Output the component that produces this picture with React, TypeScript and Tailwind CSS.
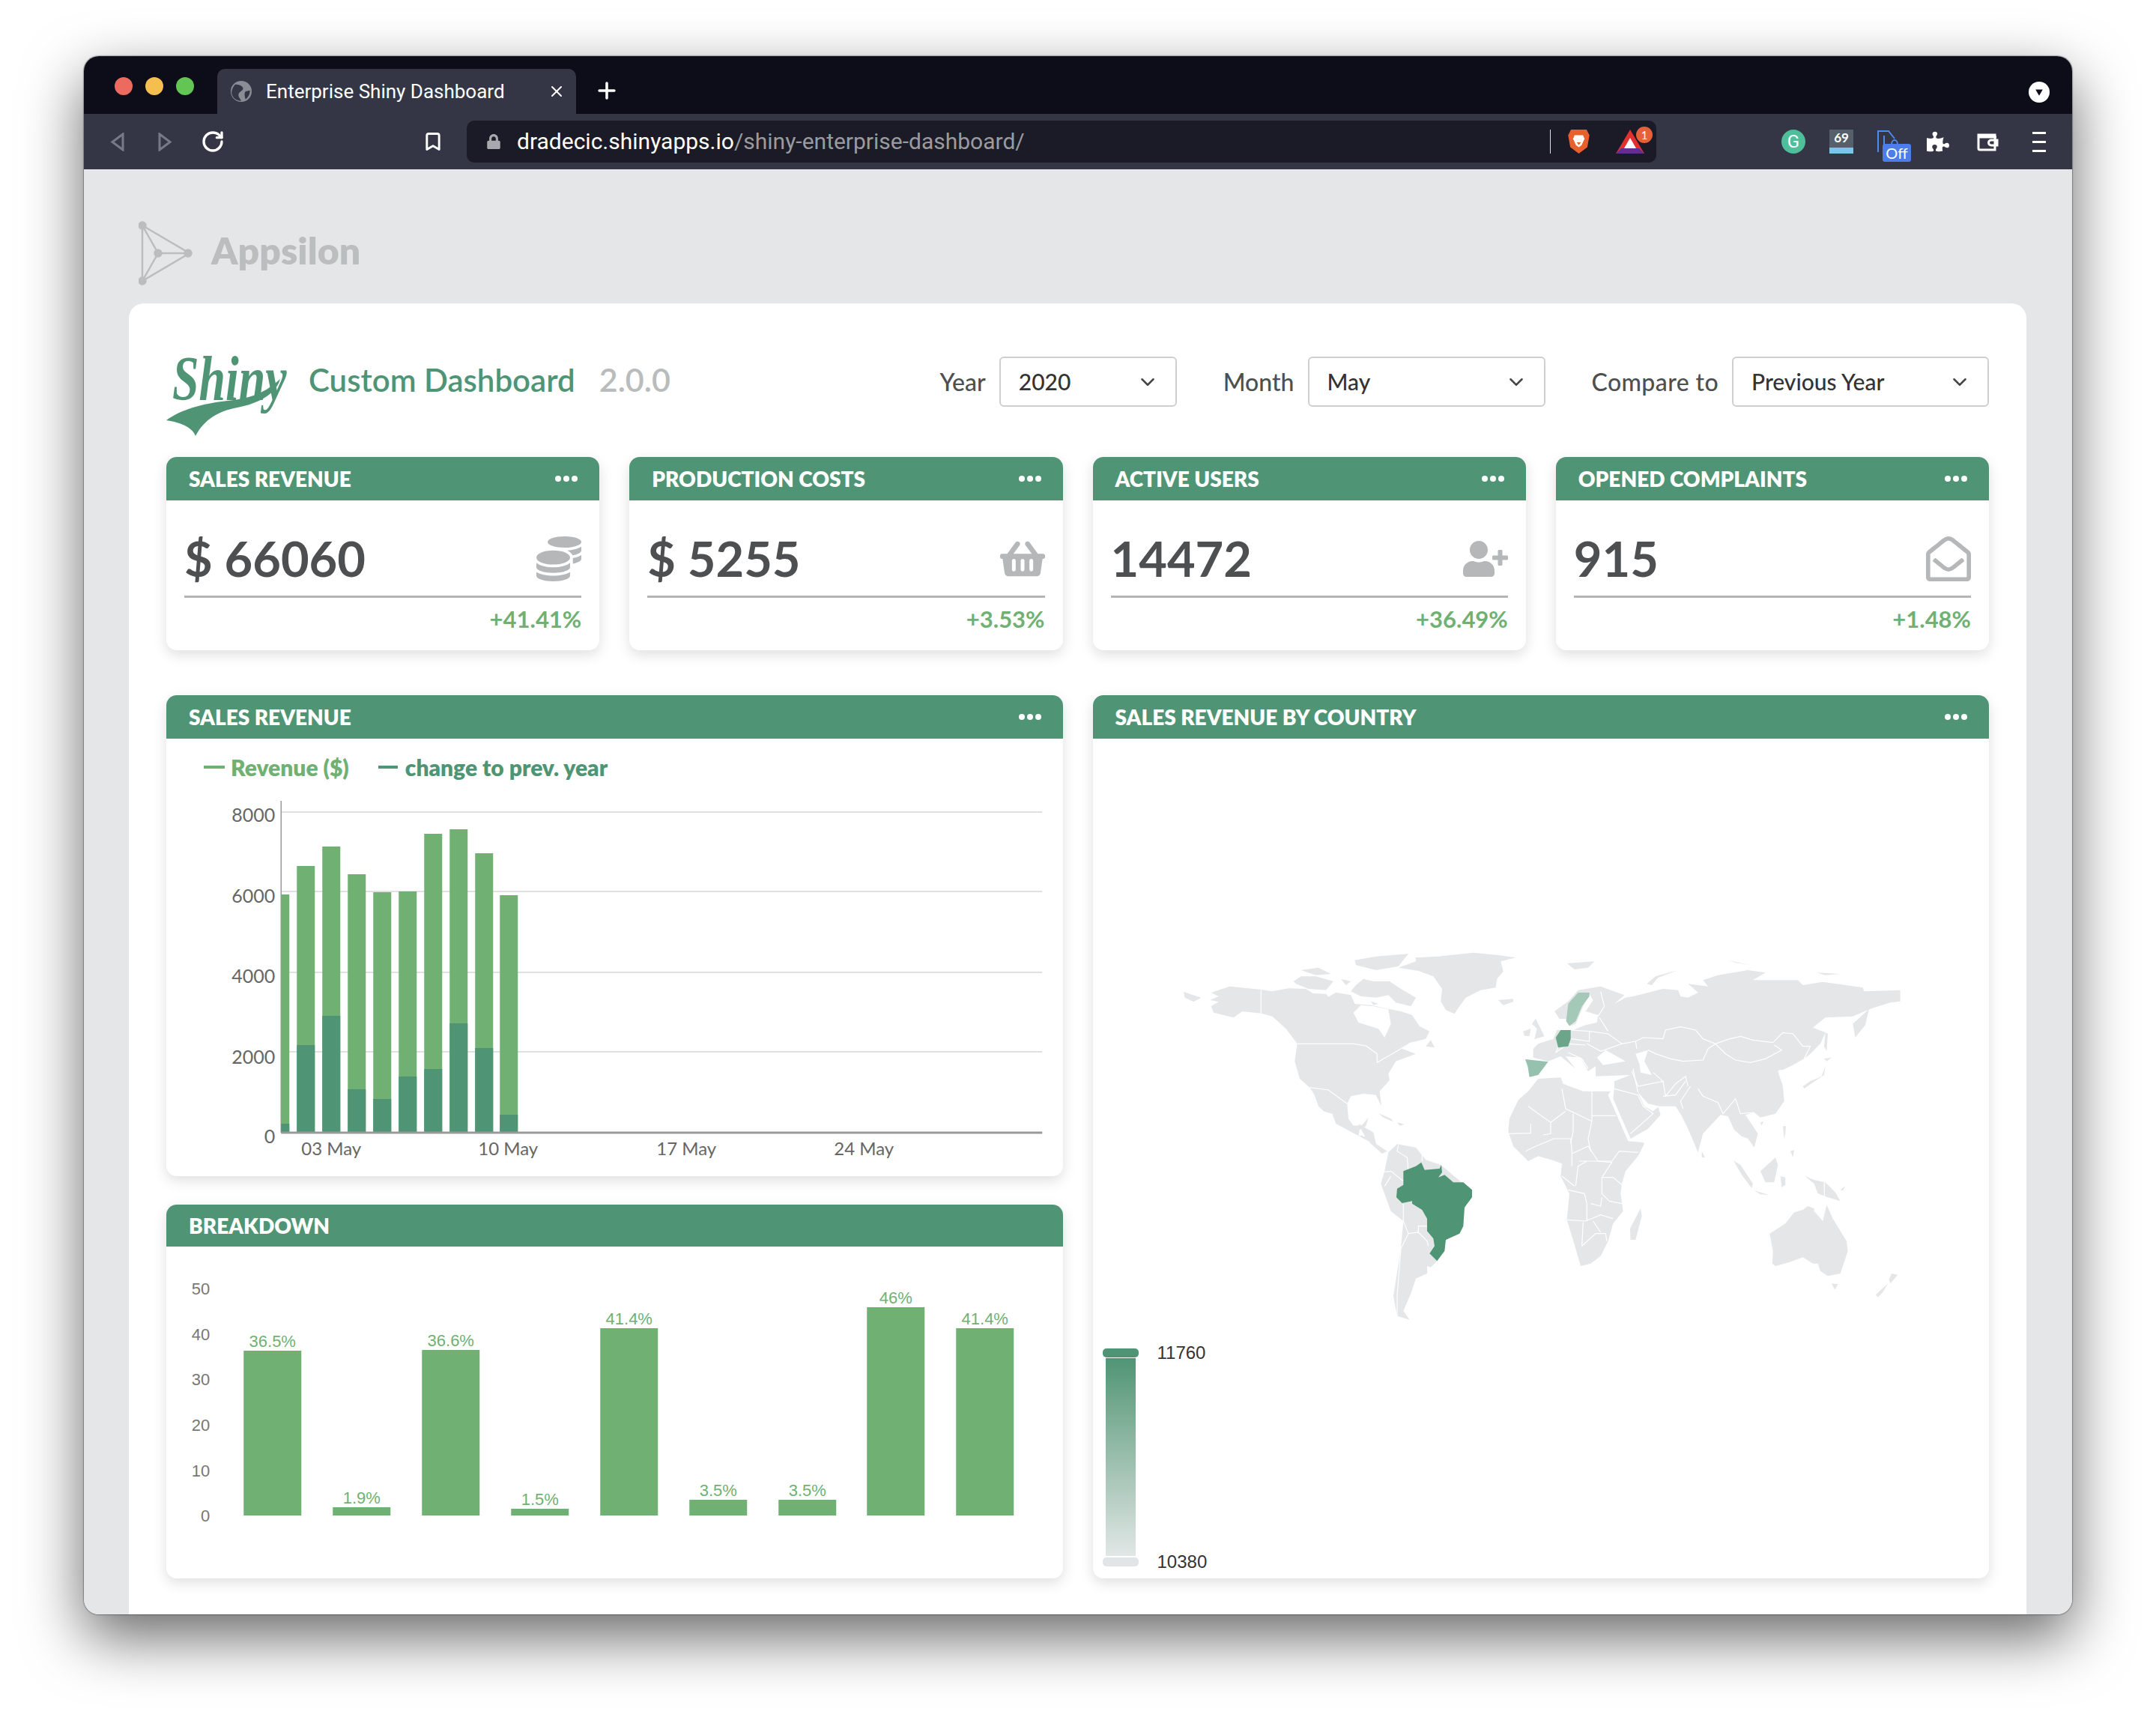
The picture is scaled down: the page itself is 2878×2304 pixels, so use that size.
import { FaCoins, FaShoppingBasket, FaUserPlus, FaRegEnvelopeOpen, FaPuzzlePiece, FaLock } from "react-icons/fa";
import { LuChevronDown, LuX, LuPlus, LuRotateCw, LuBookmark } from "react-icons/lu";
import type { ReactNode } from "react";

const GREEN = "#4f9575";
const LIGHT = "#70b173";

const KPIS = [
  { title: "SALES REVENUE", value: "$ 66060", change: "+41.41%", icon: <FaCoins /> },
  { title: "PRODUCTION COSTS", value: "$ 5255", change: "+3.53%", icon: <FaShoppingBasket /> },
  { title: "ACTIVE USERS", value: "14472", change: "+36.49%", icon: <FaUserPlus /> },
  { title: "OPENED COMPLAINTS", value: "915", change: "+1.48%", icon: <FaRegEnvelopeOpen /> },
];

// x, top of revenue bar, top of change bar, bar width (page coordinates)
const REVENUE = [
  [375, 1194, 1500, 11],
  [396, 1156, 1395, 24],
  [430, 1130, 1356, 24],
  [464, 1167, 1454, 24],
  [498, 1191, 1467, 24],
  [532, 1190, 1437, 24],
  [566, 1113, 1427, 24],
  [600, 1107, 1366, 24],
  [634, 1139, 1399, 24],
  [667, 1195, 1488, 24],
];

const BREAKDOWN = [
  { x: 325, top: 1803, label: "36.5%" },
  { x: 444, top: 2012, label: "1.9%" },
  { x: 563, top: 1802, label: "36.6%" },
  { x: 682, top: 2014, label: "1.5%" },
  { x: 801, top: 1773, label: "41.4%" },
  { x: 920, top: 2002, label: "3.5%" },
  { x: 1039, top: 2002, label: "3.5%" },
  { x: 1157, top: 1745, label: "46%" },
  { x: 1276, top: 1773, label: "41.4%" },
];

// map pieces are traced at 3x, each region has its own origin on the page
const MAP_REGIONS = [
  {
    origin: "translate(1570 1260) scale(0.3333)",
    land: [
      "140,195 215,170 340,183 385,190 450,178 520,180 548,198 600,200 610,212 640,195 700,205 715,240 780,245 850,260 900,270 945,285 975,330 1015,350 1000,380 940,395 905,420 960,440 880,470 850,520 855,545 815,590 822,650 800,605 750,600 700,610 685,640 690,700 710,728 745,725 770,695 760,730 735,745 730,770 790,760 800,800 770,790 700,752 640,720 625,680 590,670 555,605 535,575 495,540 475,470 485,400 440,340 385,290 340,278 265,270 180,330 230,295 150,275 140,250 170,232 135,225 170,210",
      "470,150 500,130 560,130 630,150 600,185 530,180 480,160",
      "660,140 700,150 680,165",
      "750,140 790,150 855,150 900,180 960,215 940,250 880,235 850,205 800,215 740,210 700,190 720,165",
      "500,105 570,95 620,120 560,125",
      "715,65 800,50 930,40 890,90 800,105 720,85",
      "780,230 810,240 790,245",
      "960,55 1050,50 1190,35 1290,45 1360,55 1300,70 1310,110 1285,140 1280,175 1220,185 1160,215 1135,250 1115,280 1080,265 1060,230 1065,180 1030,130 970,108 890,95 960,70",
      "1290,225 1350,220 1350,232 1310,245",
      "30,192 100,215 70,232 35,215",
      "1000,410 1020,385 1035,415",
      "810,678 860,700 870,712 830,695",
      "885,715 915,722 895,728",
      "1425,320 1440,300 1475,370 1435,382 1445,340",
      "1390,350 1420,340 1415,370 1395,368",
      "545,580 590,670 570,650",
    ],
    holes: ["710,275 740,245 790,250 850,262 860,320 835,375 810,340 730,315"],
    borders: [
      "340,183 340,278",
      "485,400 710,400 760,408 805,440 805,475 900,420 940,395",
      "535,575 610,585 685,640",
      "735,745 750,770 800,760",
    ],
  },
  {
    origin: "translate(2040 1280) scale(0.3333)",
    land: [
      "20,360 40,340 100,320 115,285 180,285 230,265 275,255 280,225 300,200 300,125 380,145 345,180 390,155 420,150 540,120 600,125 610,150 640,155 680,135 640,100 720,110 700,85 760,65 880,45 950,55 900,85 1080,85 1100,105 1180,92 1340,115 1345,130 1490,125 1490,170 1450,175 1370,200 1300,230 1190,235 1140,275 1190,295 1170,340 1130,380 1105,400 1060,425 1020,445 1000,445 1030,420 1000,450 1020,510 1025,570 990,620 930,635 905,615 870,625 920,700 905,755 880,720 855,710 825,685 800,630 770,625 700,700 680,775 640,680 610,620 590,590 520,590 530,625 480,680 410,720 340,560 345,520 345,490 410,465 270,470 270,430 240,450 210,395 150,390 190,440 130,390 80,410 20,395",
      "105,210 160,170 200,125 290,110 385,145 345,180 300,160 305,195 280,225 230,210 260,165 245,140 220,190 190,260 165,270 150,240 125,240",
      "1190,295 1200,300 1195,370 1185,350",
      "1100,510 1130,490 1175,470 1190,430 1185,465 1140,495 1105,520",
      "1185,400 1215,395 1195,410",
      "1300,260 1365,200 1350,265 1310,315",
      "695,770 708,795 695,795",
      "1020,670 1032,670 1030,700 1025,720",
      "1050,770 1065,765 1060,795",
      "930,655 942,650 935,668",
      "475,100 510,70 600,45 520,75 495,105",
      "155,18 265,10 240,35 185,42",
      "800,5 890,25 830,15",
      "1155,55 1250,60 1190,65",
    ],
    holes: [
      "275,395 310,365 345,385 390,410 300,425",
      "430,380 480,365 465,410 495,465 450,455 445,420",
      "440,535 480,580 525,590 500,610 465,590",
    ],
    borders: [
      "430,330 460,315 540,320 550,285 610,272 670,285 700,320 750,340 800,322 850,310 900,325 980,335 1020,295 1060,300 1100,350 1130,350 1105,400",
      "750,340 790,380 830,405 890,415 950,400 1015,365 985,345",
      "430,330 435,360",
      "480,365 510,380 570,400 620,410 700,405 720,360 750,340",
      "415,450 440,510 540,490 500,455",
      "540,490 550,550 590,500 630,470 640,510",
      "540,550 590,545 630,490",
      "680,520 700,550 760,575 780,620 830,560 850,620 905,615",
      "650,510 610,570 620,600",
      "420,440 430,490 440,535",
      "345,520 440,545 460,590 500,620 410,700",
      "170,285 245,290 245,330 170,320",
      "245,290 320,300 375,340 290,370 235,340",
      "120,355 110,375 160,340 230,345",
      "160,375 215,400 240,440",
      "100,320 60,325",
      "290,130 305,190 280,230",
      "285,235 320,290",
      "375,340 430,330",
    ],
  },
  {
    origin: "translate(1790 1500) scale(0.3333)",
    land: [
      "750,-130 790,-180 880,-185 890,-160 970,-130 1080,-130 1070,-115 1150,70 1210,75 1215,80 1190,130 1140,190 1125,240 1120,280 1130,350 1090,400 1070,470 1040,530 1000,560 960,570 940,500 905,385 915,280 880,210 885,160 860,150 790,130 750,150 690,90 670,30 675,-21 711,-96",
      "1200,340 1205,370 1180,465 1160,465 1158,420",
      "190,115 225,82 300,95 340,145 400,165 525,270 495,340 480,430 415,470 385,550 360,575 345,570 345,600 300,620 280,680 250,750 275,785 225,770 210,690 240,500 250,390 200,350 160,240 175,190",
      "70,0 130,35 140,80 185,110 165,120 120,80 90,40",
    ],
    holes: [],
    borders: [
      "885,-140 900,-60 1005,-10",
      "1005,-130 1005,-10 990,60 1000,110",
      "1005,-32 1100,-32",
      "750,-70 840,-5 840,40 810,45",
      "840,-5 900,-50",
      "930,-40 930,30 920,80",
      "670,40 760,38 760,0",
      "740,110 780,90 830,70 850,60 920,60 925,110 925,170",
      "925,120 990,90 1030,150 1085,150 1115,110 1190,115",
      "955,150 1030,150 1085,155 1045,215 1045,280 1075,310 1125,320",
      "1045,215 1090,215 1125,245",
      "905,385 980,390 1040,365 1090,380",
      "985,320 985,390",
      "1000,320 1040,330 1045,295",
      "970,395 965,490",
      "965,490 1020,440 1060,440 1065,470",
      "1010,390 1040,435",
      "910,265 975,280 985,320",
      "885,210 935,250",
      "985,150 950,170 940,250",
      "230,85 225,110 265,135 270,190",
      "325,120 325,150",
      "160,195 200,190 250,230",
      "175,250 200,210",
      "250,320 250,390 270,440 310,435 345,470 350,490",
      "240,500 225,690 225,770",
      "310,435 310,410 345,410",
      "270,440 240,500",
    ],
  },
  {
    origin: "translate(2280 1500) scale(0.3333)",
    land: [
      "102,148 130,165 180,240 175,258 135,205",
      "185,268 245,285 210,283",
      "210,190 270,135 280,165 265,235 230,235",
      "290,210 310,215 310,245 295,255",
      "388,210 425,225 470,235 510,275 530,310 480,295 440,280 425,240",
      "530,265 550,250 540,268",
      "247,440 310,400 345,355 380,345 400,330 425,340 425,350 460,390 475,325 500,380 555,470 560,510 530,600 480,610 450,590 440,560 420,560 380,535 325,555 270,570 258,560 260,510",
      "495,640 520,643 508,665",
      "735,600 760,605 730,640 725,625",
      "720,640 700,675 680,695 672,685",
    ],
    holes: [],
    borders: ["466,235 466,295"],
  },
];

function Dots() {
  return (
    <div className="flex gap-[3px]">
      <span className="size-2 rounded-full bg-white" />
      <span className="size-2 rounded-full bg-white" />
      <span className="size-2 rounded-full bg-white" />
    </div>
  );
}

function CardHeader({ title, dots = true, tall = true }: { title: string; dots?: boolean; tall?: boolean }) {
  return (
    <div className={`flex items-center justify-between rounded-t-[14px] bg-[#4f9575] pl-[30px] pr-[29px] ${tall ? "h-[58px]" : "h-[56px]"}`}>
      <span className="text-[28px] font-extrabold text-white">{title}</span>
      {dots && <Dots />}
    </div>
  );
}

function Card({ children, className = "" }: { children: ReactNode; className?: string }) {
  return (
    <div className={`rounded-[14px] bg-white shadow-[0_6px_18px_rgba(0,0,0,0.13)] ${className}`}>{children}</div>
  );
}

function Kpi({ title, value, change, icon }: (typeof KPIS)[number]) {
  return (
    <Card className="h-[258px]">
      <CardHeader title={title} />
      <div className="px-6">
        <div className="flex h-[130px] items-center justify-between border-b-[3px] border-[#b5b5b5] pt-[28px]">
          <span className="text-[65px] font-bold leading-none text-[#4d4f51]">{value}</span>
          <span className="text-[60px] text-[#b5b7b8]">{icon}</span>
        </div>
        <div className="pt-[10px] text-right text-[31px] font-bold leading-[36px] text-[#70b173]">{change}</div>
      </div>
    </Card>
  );
}

function Select({ value, width }: { value: string; width: string }) {
  return (
    <div className={`flex h-[67px] items-center justify-between rounded-[6px] border-2 border-[#cfcfcf] pl-[24px] pr-[22px] text-[30px] font-medium text-[#333] ${width}`}>
      <span>{value}</span>
      <LuChevronDown className="size-[30px] text-[#444]" />
    </div>
  );
}

function RevenueChart() {
  const grid = [
    { y: 1084, label: "8000", text: 1097 },
    { y: 1190, label: "6000", text: 1205 },
    { y: 1298, label: "4000", text: 1312 },
    { y: 1404, label: "2000", text: 1420 },
  ];
  const ticks = [
    { x: 442, label: "03 May" },
    { x: 678, label: "10 May" },
    { x: 916, label: "17 May" },
    { x: 1153, label: "24 May" },
  ];
  return (
    <svg viewBox="222 1060 1196 510" className="block h-[510px] w-full">
      {grid.map((g) => (
        <g key={g.label}>
          <line x1="375" x2="1391" y1={g.y} y2={g.y} stroke="#e0e0e0" strokeWidth="2" />
          <text x="367" y={g.text} textAnchor="end" fontSize="25" fill="#666">{g.label}</text>
        </g>
      ))}
      <line x1="375" x2="375" y1="1069" y2="1512" stroke="#999" strokeWidth="1.5" />
      {REVENUE.map(([x, top, dark, w]) => (
        <g key={x}>
          <rect x={x} y={top} width={w} height={1512 - top} fill={LIGHT} />
          <rect x={x} y={dark} width={w} height={1512 - dark} fill={GREEN} />
        </g>
      ))}
      <line x1="375" x2="1391" y1="1512" y2="1512" stroke="#999" strokeWidth="3" />
      <text x="367" y="1526" textAnchor="end" fontSize="25" fill="#666">0</text>
      {ticks.map((t) => (
        <text key={t.label} x={t.x} y="1542" textAnchor="middle" fontSize="24" fill="#666">{t.label}</text>
      ))}
    </svg>
  );
}

function BreakdownChart() {
  const ys = [
    [1728, "50"],
    [1789, "40"],
    [1849, "30"],
    [1910, "20"],
    [1971, "10"],
    [2031, "0"],
  ];
  return (
    <svg viewBox="222 1664 1196 443" className="block h-[443px] w-full" fontFamily="'Liberation Sans', Arial, sans-serif">
      {ys.map(([y, label]) => (
        <text key={label} x="280" y={y} textAnchor="end" fontSize="22" fill="#777">{label}</text>
      ))}
      {BREAKDOWN.map((b) => (
        <g key={b.x}>
          <rect x={b.x} y={b.top} width="77" height={2023 - b.top} fill={LIGHT} />
          <text x={b.x + 38.5} y={b.top - 5} textAnchor="middle" fontSize="22" fill={LIGHT}>{b.label}</text>
        </g>
      ))}
    </svg>
  );
}

function WorldMap() {
  return (
    <svg viewBox="1540 1240 1050 560" className="ml-[81px] mt-[254px] block h-[560px] w-[1050px]">
      {MAP_REGIONS.map((r) => (
        <g key={r.origin} transform={r.origin}>
          {r.land.map((p) => (
            <polygon key={p} points={p} fill="#e4e6e8" />
          ))}
          {r.holes.map((p) => (
            <polygon key={p} points={p} fill="#fff" />
          ))}
          {r.borders.map((p) => (
            <polyline key={p} points={p} fill="none" stroke="#fff" strokeWidth="1.2" vectorEffect="non-scaling-stroke" />
          ))}
        </g>
      ))}
      <g transform="translate(1570 1260) scale(0.3333)">
        <polygon points="1398,462 1490,472 1450,525 1415,533 1408,490" fill="#96c1ae" />
      </g>
      <g transform="translate(2040 1280) scale(0.3333)">
        <polygon points="152,250 160,180 200,135 245,135 245,150 215,190 190,250 165,268" fill="#a5c9b8" />
        <polygon points="110,315 130,285 170,285 170,320 160,350 120,355" fill="#6ba58a" />
      </g>
      <g transform="translate(1790 1500) scale(0.3333)">
        <polygon
          points="250,190 300,170 322,155 335,185 395,180 402,165 405,195 390,215 415,205 450,235 490,235 525,265 525,295 495,335 490,410 475,440 420,465 415,510 385,550 355,520 375,490 370,460 345,430 345,380 325,345 285,320 285,310 245,318 222,295 225,260 250,245"
          fill={GREEN}
        />
      </g>
    </svg>
  );
}

function MapLegend() {
  return (
    <div className="ml-[13px] flex h-[292px] font-['Liberation_Sans',Arial,sans-serif] text-[24px] leading-none text-[#333]">
      <div className="flex w-[48px] flex-col items-center">
        <div className="h-[12px] w-full rounded-[5px] bg-[#4f9575]" />
        <div className="mb-[2px] mt-px h-[264px] w-[40px] bg-gradient-to-b from-[#4f9575] to-[#e1e7e6]" />
        <div className="h-[12px] w-full rounded-[5px] bg-[#e2e5e7]" />
      </div>
      <div className="ml-[25px] flex flex-col justify-between">
        <span className="-mt-[6px]">11760</span>
        <span className="-mb-[5px]">10380</span>
      </div>
    </div>
  );
}

function ShinyLogo() {
  return (
    <div className="relative h-[106px] w-[160px] shrink-0">
      <span className="absolute left-[8px] top-[-12px] origin-left scale-x-[0.76] font-['Liberation_Serif',serif] text-[84px] font-bold italic leading-none text-[#4f9575]">
        Shiny
      </span>
      <svg viewBox="0 0 160 106" className="absolute inset-0 size-full">
        <path d="M0 85C20 70 50 62 90 58C120 54 135 45 152 30C146 50 125 62 95 68C68 73 50 85 39 106C35 95 20 88 0 85Z" fill={GREEN} />
      </svg>
    </div>
  );
}

function AppsilonLogo() {
  return (
    <svg viewBox="0 0 72 86" className="h-[86px] w-[72px]" fill="#babebe" stroke="#babebe" strokeWidth="2.5">
      <path d="M5 6L68 43L5 80ZM5 6L26 43L5 80M26 43H68" fill="none" />
      <circle cx="5" cy="6" r="4.5" />
      <circle cx="5" cy="80" r="4.5" />
      <circle cx="66" cy="43" r="4.5" />
      <circle cx="26" cy="43" r="4.5" />
    </svg>
  );
}

function ToolbarSlot({ children, width }: { children: ReactNode; width: string }) {
  return <div className={`flex justify-center ${width}`}>{children}</div>;
}

function BrowserChrome() {
  return (
    <>
      <div className="flex h-[77px] bg-[#0c0d18] pt-[17px]">
        <div className="flex h-[60px] w-[178px] gap-[17px] pl-[41px] pt-[11px]">
          <span className="size-[24px] rounded-full bg-[#ed6a5e]" />
          <span className="size-[24px] rounded-full bg-[#f5bf4f]" />
          <span className="size-[24px] rounded-full bg-[#62c554]" />
        </div>
        <div className="flex h-[60px] w-[479px] items-center rounded-t-[10px] bg-[#343646] pl-[18px] pr-[14px] font-['Roboto',sans-serif] text-[26px] text-white">
          <svg viewBox="0 0 24 24" className="size-[28px] shrink-0">
            <circle cx="12" cy="12" r="12" fill="#8b8d96" />
            <path d="M5 4c4 0 8 1 9 4s-4 4-5 7 2 5 3 8c-5 0-10-3-11-9 0-4 2-8 4-10ZM17 12l5-1c0 4-2 8-5 10-1-3-2-7 0-9Z" fill="#343646" />
          </svg>
          <span className="ml-[19px] flex-1 whitespace-nowrap">Enterprise Shiny Dashboard</span>
          <LuX className="size-[24px]" />
        </div>
        <LuPlus className="ml-[24px] mt-[12px] size-[34px] text-white" strokeWidth={2.5} />
        <div className="flex flex-1 justify-end pr-[30px] pt-[17px]">
          <div className="flex size-[28px] items-center justify-center rounded-full bg-white">
            <svg viewBox="0 0 10 10" className="size-[12px]"><path d="M1 2h8L5 9Z" fill="#0c0d18" /></svg>
          </div>
        </div>
      </div>
      <div className="flex h-[74px] items-center bg-[#343646]">
        <svg viewBox="0 0 19 25" className="ml-[35px] h-[25px] w-[19px]" fill="none" stroke="#777a86" strokeWidth="3">
          <path d="M17 2V23L3 12.5Z" />
        </svg>
        <svg viewBox="0 0 19 25" className="ml-[45px] h-[25px] w-[19px]" fill="none" stroke="#777a86" strokeWidth="3">
          <path d="M2 2V23L16 12.5Z" />
        </svg>
        <LuRotateCw className="ml-[38px] size-[32px] text-white" strokeWidth={2.5} />
        <LuBookmark className="ml-[264px] size-[28px] text-white" strokeWidth={2.5} />
        <div className="ml-[31px] flex h-[56px] w-[1588px] items-center rounded-[10px] bg-[#1a1b26] pl-[26px] pr-[16px]">
          <FaLock className="size-[20px] text-[#a8a9af]" />
          <span className="ml-[21px] -mt-[2px] flex-1 whitespace-nowrap font-['Roboto',sans-serif] text-[30px]">
            <span className="text-white">dradecic.shinyapps.io</span>
            <span className="text-[#9a9a9f]">/shiny-enterprise-dashboard/</span>
          </span>
          <span className="h-[32px] w-[1px] bg-[#ddd]" />
          <svg viewBox="0 0 32 38" className="ml-[22px] h-[36px] w-[31px]">
            <path d="M5 2h22l4 8-3 17-12 9-12-9L1 10Z" fill="#e8612c" />
            <path d="M10 10h12l2 5-4 9-4 3-4-3-4-9Z" fill="#fff" />
            <path d="M13 20h6l-3 4Z" fill="#e8612c" />
          </svg>
          <div className="relative ml-[34px] h-[32px] w-[38px]">
            <svg viewBox="0 0 38 32" className="size-full">
              <path d="M19 0L38 32H0Z" fill="#e0312f" />
              <path d="M19 11L27 25H11Z" fill="#fff" />
              <path d="M7 25H31L38 32H0Z" fill="#662d91" />
            </svg>
            <span className="absolute -right-[11px] -top-[4px] flex size-[22px] items-center justify-center rounded-full bg-[#e6603a] text-[15px] text-white">1</span>
          </div>
        </div>
        <div className="ml-[151px] flex items-center">
          <ToolbarSlot width="w-[64px]">
            <div className="flex size-[32px] items-center justify-center rounded-full bg-[#4fbe9a] font-['Roboto',sans-serif] text-[24px] text-white">G</div>
          </ToolbarSlot>
          <ToolbarSlot width="w-[64px]">
            <div className="flex h-[32px] w-[32px] flex-col items-center bg-[#55606a] text-[17px] font-bold leading-[22px] text-white">
              69
              <span className="mt-auto h-[8px] w-full bg-[#7cc4ea]" />
            </div>
          </ToolbarSlot>
          <ToolbarSlot width="w-[65px]">
            <div className="relative h-[32px] w-[36px]">
              <svg viewBox="0 0 36 32" className="size-full" fill="none" stroke="#4d8be8" strokeWidth="2"><path d="M2 30V2h14l8 10M10 20V8M20 20c0-8 8-8 8 0" /></svg>
              <span className="absolute right-[-10px] top-[19px] rounded-[3px] bg-[#4d7de8] px-[4px] text-[20px] leading-[24px] text-white">Off</span>
            </div>
          </ToolbarSlot>
          <ToolbarSlot width="w-[63px]">
            <FaPuzzlePiece className="size-[30px] text-white" />
          </ToolbarSlot>
          <ToolbarSlot width="w-[70px]">
            <svg viewBox="0 0 30 28" className="h-[28px] w-[30px]" fill="none" stroke="#fff" strokeWidth="3">
              <path d="M3 5h22v20H5a2 2 0 0 1-2-2ZM3 8h24M28 12H20a3 3 0 0 0 0 7h8Z" />
            </svg>
          </ToolbarSlot>
          <ToolbarSlot width="w-[68px]">
            <div className="flex flex-col gap-[9px]">
              <span className="h-[3px] w-[18px] bg-white" />
              <span className="h-[3px] w-[18px] bg-white" />
              <span className="h-[3px] w-[18px] bg-white" />
            </div>
          </ToolbarSlot>
        </div>
      </div>
    </>
  );
}

export default function App() {
  return (
    <div className="h-[2304px] w-[2878px] bg-white pl-[112px] pt-[75px] font-['Lato',sans-serif]">
      <div className="flex h-[2080px] w-[2654px] flex-col overflow-hidden rounded-[20px] shadow-[0_30px_80px_rgba(0,0,0,0.6),0_0_2px_#000]">
        <BrowserChrome />
        <div className="flex-1 bg-[#e4e6e8] pl-[60px]">
          <div className="flex h-[179px] items-start gap-[25px] pl-[13px] pt-[69px]">
            <AppsilonLogo />
            <span className="pt-[14px] text-[50px] font-extrabold leading-none text-[#babebe]">Appsilon</span>
          </div>
          <div className="h-[1750px] w-[2533px] rounded-t-[20px] bg-white px-[50px] pt-[71px]">
            <div className="flex h-[134px] items-start">
              <ShinyLogo />
              <span className="ml-[30px] pt-[6px] text-[42px] font-semibold leading-[50px] text-[#4f9575]">Custom Dashboard</span>
              <span className="ml-[32px] pt-[6px] text-[43px] font-semibold leading-[50px] text-[#b9bcbc]">2.0.0</span>
              <div className="ml-auto flex h-[67px] items-center text-[32px] font-medium text-[#4d4f51]">
                <span className="mr-[18px]">Year</span>
                <Select value="2020" width="w-[237px]" />
                <span className="ml-[62px] mr-[18px]">Month</span>
                <Select value="May" width="w-[317px]" />
                <span className="ml-[62px] mr-[18px] tracking-[0.4px]">Compare to</span>
                <Select value="Previous Year" width="w-[343px]" />
              </div>
            </div>
            <div className="grid grid-cols-4 gap-x-[40px]">
              {KPIS.map((k) => (
                <Kpi key={k.title} {...k} />
              ))}
            </div>
            <div className="mt-[60px] grid grid-cols-2 gap-x-[40px]">
              <div className="flex flex-col gap-[38px]">
                <Card className="h-[642px]">
                  <CardHeader title="SALES REVENUE" />
                  <div className="flex h-[76px] items-center gap-[39px] pl-[50px] text-[30px] font-extrabold">
                    <span className="flex items-center gap-[8px] text-[#70b173]">
                      <span className="h-[4px] w-[28px] bg-[#70b173]" />
                      Revenue ($)
                    </span>
                    <span className="flex items-center gap-[10px] text-[#4f9575]">
                      <span className="h-[4px] w-[26px] bg-[#4f9575]" />
                      change to prev. year
                    </span>
                  </div>
                  <div className="-mt-[2px]">
                    <RevenueChart />
                  </div>
                </Card>
                <Card className="h-[499px]">
                  <CardHeader title="BREAKDOWN" dots={false} tall={false} />
                  <BreakdownChart />
                </Card>
              </div>
              <Card className="h-[1179px]">
                <CardHeader title="SALES REVENUE BY COUNTRY" />
                <WorldMap />
                <MapLegend />
              </Card>
            </div>
          </div>
        </div>
      </div>
    </div>
  );
}
